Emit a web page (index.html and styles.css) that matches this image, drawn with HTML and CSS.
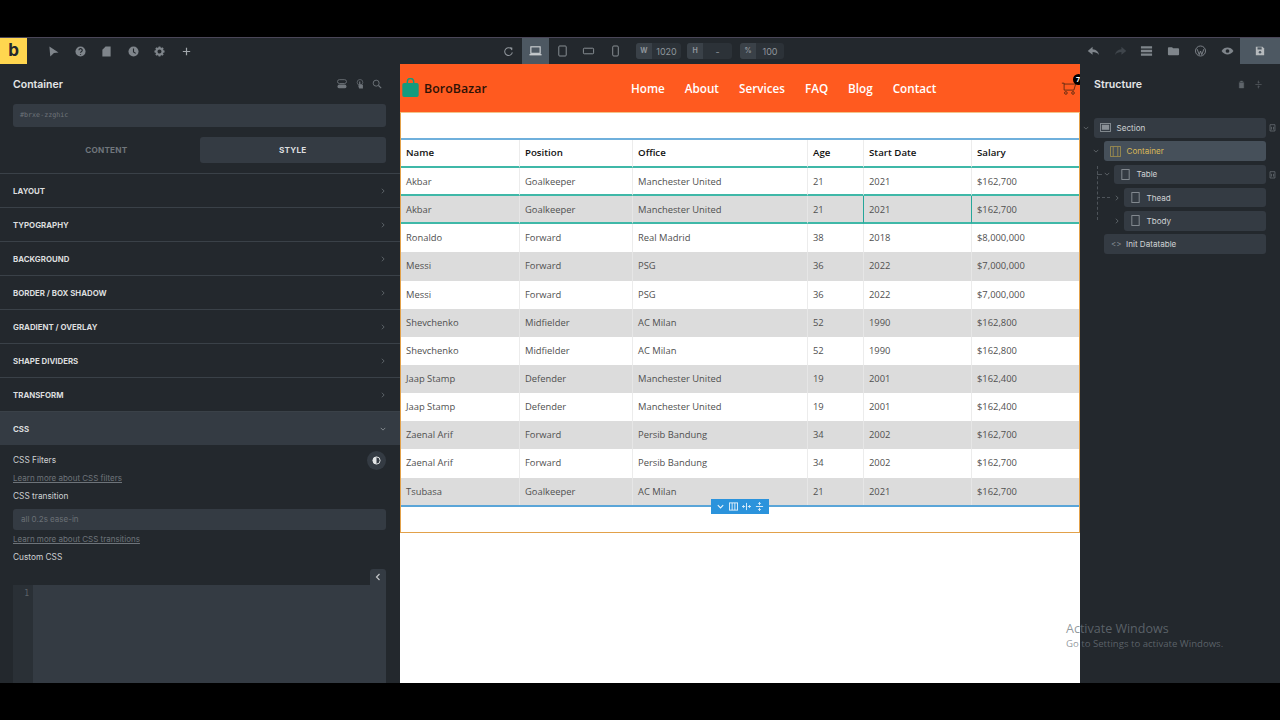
FILE: index.html
```html
<!DOCTYPE html>
<html lang="en">
<head>
<meta charset="utf-8">
<title>Structure</title>
<link rel="stylesheet" href="styles.css">
</head>
<body>
<div class="screen">
  <header class="topbar">
    <div class="tb-left">
      <div class="logo">b</div>
      <div class="tb-icons">
        <svg class="ic" viewBox="0 0 12 12"><path d="M1.500 .5 11.500 7 6.500 7.500 2.500 11.500Z" fill="currentColor"/></svg>
        <svg class="ic" viewBox="0 0 12 12"><circle cx="6" cy="6" r="5.5" fill="currentColor"/><path d="M4.300 4.600a1.800 1.800 0 1 1 2.600 1.600c-.6.3-.9.6-.9 1.200M6 8.600v1" stroke="#23282d" stroke-width="1.300" fill="none"/></svg>
        <svg class="ic" viewBox="0 0 12 12"><path d="M5 .5h5.500v11h-9V4Z" fill="currentColor"/></svg>
        <svg class="ic" viewBox="0 0 12 12"><circle cx="6" cy="6" r="5.5" fill="currentColor"/><path d="M6 2.800V6.400L8.400 8" stroke="#23282d" stroke-width="1.200" fill="none"/></svg>
        <svg class="ic" viewBox="0 0 12 12"><circle cx="6" cy="6" r="3.400" fill="none" stroke="currentColor" stroke-width="2.400"/><path d="M6 .5v2M6 9.500v2M.5 6h2M9.500 6h2M2.100 2.100l1.400 1.400M8.500 8.500l1.400 1.400M9.900 2.100 8.500 3.500M3.500 8.500 2.100 9.900" stroke="currentColor" stroke-width="2"/></svg>
        <svg class="ic ic-plus" viewBox="0 0 12 12"><path d="M6 2v8M2 6h8" stroke="currentColor" stroke-width="1.300"/></svg>
      </div>
    </div>
    <div class="tb-center">
      <svg class="ic-sm reload" viewBox="0 0 12 12"><path d="M9.800 4.200A4.200 4.200 0 1 0 10.200 7" fill="none" stroke="currentColor" stroke-width="1.100"/><path d="M7.500 1 10.300 2 9.800 4.800Z" fill="currentColor"/></svg>
      <div class="bp bp-active"><svg viewBox="0 0 14 12" class="ic-bp"><rect x="2" y="1.500" width="10" height="7" fill="none" stroke="currentColor" stroke-width="1.200"/><path d="M.5 10h13" stroke="currentColor" stroke-width="1.400"/></svg></div>
      <div class="bp"><svg viewBox="0 0 14 12" class="ic-bp"><rect x="3" y=".6" width="8" height="10.800" rx="1" fill="none" stroke="currentColor"/></svg></div>
      <div class="bp"><svg viewBox="0 0 14 12" class="ic-bp"><rect x="1.500" y="3" width="11" height="6" rx="1" fill="none" stroke="currentColor"/></svg></div>
      <div class="bp"><svg viewBox="0 0 14 12" class="ic-bp"><rect x="4" y=".6" width="6" height="10.800" rx="1.200" fill="none" stroke="currentColor"/></svg></div>
      <div class="dim dim-w"><span class="dim-k">W</span><span class="dim-v">1020</span></div>
      <div class="dim dim-h"><span class="dim-k">H</span><span class="dim-v">-</span></div>
      <div class="dim dim-p"><span class="dim-k">%</span><span class="dim-v">100</span></div>
    </div>
    <div class="tb-right">
      <svg class="ic-r" viewBox="0 0 14 12"><path d="M6 1.500 .8 6 6 10V7.200c3 0 5 .8 7 3-.6-3.600-3-6-7-6.200Z" fill="currentColor"/></svg>
      <svg class="ic-r dim-ic" viewBox="0 0 14 12"><path d="M8 1.500 13.200 6 8 10V7.200c-3 0-5 .8-7 3 .6-3.600 3-6 7-6.200Z" fill="currentColor"/></svg>
      <svg class="ic-r" viewBox="0 0 14 12"><path d="M1 .8h12v2.600H1ZM1 4.700h12v2.600H1ZM1 8.600h12v2.600H1Z" fill="currentColor"/></svg>
      <svg class="ic-r" viewBox="0 0 14 12"><path d="M1 3a1 1 0 0 1 1-1h3.500l1 1H12a1 1 0 0 1 1 1v5.600a1 1 0 0 1-1 1H2a1 1 0 0 1-1-1Z" fill="currentColor"/></svg>
      <svg class="ic-r" viewBox="0 0 14 12"><circle cx="7" cy="6" r="5.400" fill="none" stroke="currentColor" stroke-width="1"/><path d="M3.400 4 5.600 10 7 6l1.400 4 2.200-6" fill="none" stroke="currentColor" stroke-width="1"/></svg>
      <svg class="ic-r" viewBox="0 0 14 12"><path d="M.6 6C3.600 1 10.400 1 13.400 6 10.400 11 3.600 11 .6 6Z" fill="currentColor"/><circle cx="7" cy="6" r="2" fill="#23282d"/></svg>
      <div class="save"><svg class="ic-s" viewBox="0 0 12 12"><path d="M1 1h8l2 2v8H1Z" fill="currentColor"/><rect x="3" y="1.600" width="5" height="2.600" fill="#4d5862"/><circle cx="6" cy="7.600" r="1.500" fill="#4d5862"/></svg></div>
    </div>
  </header>

  <div class="main">
    <aside class="panel">
      <div class="p-head">
        <span class="p-title">Container</span>
        <div class="p-tools">
          <svg class="pt" viewBox="0 0 12 12"><rect x=".6" y=".8" width="10.800" height="4.600" rx="2.300" fill="none" stroke="currentColor"/><rect x=".6" y="6.600" width="10.800" height="4.600" rx="2.300" fill="currentColor"/></svg>
          <svg class="pt" viewBox="0 0 12 12"><circle cx="6" cy="4" r="3.400" fill="none" stroke="currentColor" stroke-width=".8"/><path d="M5 3v5L3.600 7.400 5 11.500h4.500V7.200L6.400 6.400V3Z" fill="currentColor"/></svg>
          <svg class="pt" viewBox="0 0 12 12"><circle cx="5" cy="5" r="3.600" fill="none" stroke="currentColor" stroke-width="1.100"/><path d="M7.800 7.800 11 11" stroke="currentColor" stroke-width="1.300"/></svg>
        </div>
      </div>
      <div class="id-field">#brxe-zzghic</div>
      <div class="tabs">
        <div class="tab">CONTENT</div>
        <div class="tab tab-on">STYLE</div>
      </div>
      <div class="acc"><span>LAYOUT</span><svg class="chev" viewBox="0 0 6 8"><path d="M1.500 1 4.500 4 1.500 7" fill="none" stroke="currentColor"/></svg></div>
      <div class="acc"><span>TYPOGRAPHY</span><svg class="chev" viewBox="0 0 6 8"><path d="M1.500 1 4.500 4 1.500 7" fill="none" stroke="currentColor"/></svg></div>
      <div class="acc"><span>BACKGROUND</span><svg class="chev" viewBox="0 0 6 8"><path d="M1.500 1 4.500 4 1.500 7" fill="none" stroke="currentColor"/></svg></div>
      <div class="acc"><span>BORDER / BOX SHADOW</span><svg class="chev" viewBox="0 0 6 8"><path d="M1.500 1 4.500 4 1.500 7" fill="none" stroke="currentColor"/></svg></div>
      <div class="acc"><span>GRADIENT / OVERLAY</span><svg class="chev" viewBox="0 0 6 8"><path d="M1.500 1 4.500 4 1.500 7" fill="none" stroke="currentColor"/></svg></div>
      <div class="acc"><span>SHAPE DIVIDERS</span><svg class="chev" viewBox="0 0 6 8"><path d="M1.500 1 4.500 4 1.500 7" fill="none" stroke="currentColor"/></svg></div>
      <div class="acc"><span>TRANSFORM</span><svg class="chev" viewBox="0 0 6 8"><path d="M1.500 1 4.500 4 1.500 7" fill="none" stroke="currentColor"/></svg></div>
      <div class="acc acc-open"><span>CSS</span><svg class="chev chev-open" viewBox="0 0 8 6"><path d="M1 1.500 4 4.500 7 1.500" fill="none" stroke="currentColor"/></svg></div>
      <div class="css-body">
        <div class="filters"><span class="lbl">CSS Filters</span><span class="round"><svg viewBox="0 0 12 12" class="half"><circle cx="6" cy="6" r="4.800" fill="none" stroke="currentColor" stroke-width="1.300"/><path d="M6 1.200a4.800 4.800 0 0 0 0 9.600Z" fill="currentColor"/></svg></span></div>
        <a class="lnk lnk-1">Learn more about CSS filters</a>
        <div class="lbl lbl-t">CSS transition</div>
        <div class="tr-field">all 0.2s ease-in</div>
        <a class="lnk lnk-2">Learn more about CSS transitions</a>
        <div class="lbl lbl-c">Custom CSS</div>
        <div class="editor-wrap">
          <div class="collapse"><svg viewBox="0 0 6 8" class="coll-ic"><path d="M4.500 1 1.500 4 4.500 7" fill="none" stroke="currentColor" stroke-width="1.200"/></svg></div>
          <div class="editor"><div class="gutter">1</div></div>
        </div>
      </div>
    </aside>

    <section class="canvas">
      <nav class="site-nav">
        <div class="brand">
          <svg class="bag" viewBox="0 0 18 22"><path d="M5.500 6V4a3.500 3.500 0 0 1 7 0v2" fill="none" stroke="#149b7e" stroke-width="1.600"/><path d="M2 5.500h14a2 2 0 0 1 2 2V19a2 2 0 0 1-2 2H2a2 2 0 0 1-2-2V7.500a2 2 0 0 1 2-2Z" fill="#149b7e"/></svg>
          <span class="brand-name">BoroBazar</span>
        </div>
        <div class="links"><span>Home</span><span>About</span><span>Services</span><span>FAQ</span><span>Blog</span><span>Contact</span></div>
        <div class="cart">
          <svg class="cart-ic" viewBox="0 0 18 14"><path d="M1 1h2.500v7.800h11L16.500 2H3.500" fill="none" stroke="#5a2a12" stroke-width="1"/><circle cx="5.500" cy="12" r="1.500" fill="none" stroke="#5a2a12"/><circle cx="13.500" cy="12" r="1.500" fill="none" stroke="#5a2a12"/></svg>
          <span class="badge">7</span>
        </div>
      </nav>
      <div class="container-box">
        <table class="dt">
          <thead><tr><th class="c1">Name</th><th class="c2">Position</th><th class="c3">Office</th><th class="c4">Age</th><th class="c5">Start Date</th><th class="c6">Salary</th></tr></thead>
          <tbody>
            <tr class="sel"><td>Akbar</td><td>Goalkeeper</td><td>Manchester United</td><td>21</td><td>2021</td><td>$162,700</td></tr>
            <tr class="alt sel"><td>Akbar</td><td>Goalkeeper</td><td>Manchester United</td><td>21</td><td>2021</td><td>$162,700</td></tr>
            <tr><td>Ronaldo</td><td>Forward</td><td>Real Madrid</td><td>38</td><td>2018</td><td>$8,000,000</td></tr>
            <tr class="alt"><td>Messi</td><td>Forward</td><td>PSG</td><td>36</td><td>2022</td><td>$7,000,000</td></tr>
            <tr><td>Messi</td><td>Forward</td><td>PSG</td><td>36</td><td>2022</td><td>$7,000,000</td></tr>
            <tr class="alt"><td>Shevchenko</td><td>Midfielder</td><td>AC Milan</td><td>52</td><td>1990</td><td>$162,800</td></tr>
            <tr><td>Shevchenko</td><td>Midfielder</td><td>AC Milan</td><td>52</td><td>1990</td><td>$162,800</td></tr>
            <tr class="alt"><td>Jaap Stamp</td><td>Defender</td><td>Manchester United</td><td>19</td><td>2001</td><td>$162,400</td></tr>
            <tr><td>Jaap Stamp</td><td>Defender</td><td>Manchester United</td><td>19</td><td>2001</td><td>$162,400</td></tr>
            <tr class="alt"><td>Zaenal Arif</td><td>Forward</td><td>Persib Bandung</td><td>34</td><td>2002</td><td>$162,700</td></tr>
            <tr><td>Zaenal Arif</td><td>Forward</td><td>Persib Bandung</td><td>34</td><td>2002</td><td>$162,700</td></tr>
            <tr class="alt"><td>Tsubasa</td><td>Goalkeeper</td><td>AC Milan</td><td>21</td><td>2021</td><td>$162,700</td></tr>
          </tbody>
        </table>
        <div class="el-tools">
          <svg viewBox="0 0 10 10"><path d="M2 3.500 5 6.500 8 3.500" fill="none" stroke="currentColor" stroke-width="1.300"/></svg>
          <svg viewBox="0 0 10 10"><rect x=".5" y="1" width="9" height="8" fill="none" stroke="currentColor"/><path d="M3.500 1v8M6.500 1v8" stroke="currentColor"/></svg>
          <svg viewBox="0 0 10 10"><path d="M5 1v8M.5 5h3M6.500 5h3M2 3.500.5 5 2 6.500M8 3.500 9.500 5 8 6.500" fill="none" stroke="currentColor"/></svg>
          <svg viewBox="0 0 10 10"><path d="M1 5h8M5 .5v3M5 6.500v3M3.500 2 5 .5 6.500 2M3.500 8 5 9.500 6.500 8" fill="none" stroke="currentColor"/></svg>
        </div>
      </div>
    </section>

    <aside class="structure">
      <div class="s-head">
        <span class="s-title">Structure</span>
        <div class="s-tools">
          <svg viewBox="0 0 10 12"><path d="M1 2.500h8M3.500 2.500V1h3v1.500M1.800 3.500h6.400V11H1.800Z" fill="currentColor" stroke="currentColor" stroke-width=".6"/></svg>
          <svg viewBox="0 0 10 12"><path d="M.5 6h9M5 .5v3.500M5 8v3.500M3.500 2.500 5 4 6.500 2.500M3.500 9.500 5 8 6.500 9.500" fill="none" stroke="currentColor" stroke-width=".9"/></svg>
        </div>
      </div>
      <div class="tree">
        <div class="t-row t0">
          <svg class="t-ch" viewBox="0 0 8 6"><path d="M1 1.500 4 4.500 7 1.500" fill="none" stroke="currentColor"/></svg>
          <div class="t-item"><svg class="t-ic" viewBox="0 0 12 12"><rect x=".6" y="1.600" width="10.800" height="8.800" fill="none" stroke="currentColor"/><rect x="2" y="3" width="8" height="5.500" fill="currentColor"/></svg>Section</div>
          <svg class="t-del" viewBox="0 0 10 12"><path d="M1.500 2h7v9h-7ZM3.500 5v4M6.500 5v4" fill="none" stroke="currentColor"/></svg>
        </div>
        <div class="t-row t1">
          <svg class="t-ch" viewBox="0 0 8 6"><path d="M1 1.500 4 4.500 7 1.500" fill="none" stroke="currentColor"/></svg>
          <div class="t-item t-sel"><svg class="t-ic" viewBox="0 0 12 12"><rect x=".6" y=".6" width="10.800" height="10.800" fill="none" stroke="currentColor"/><path d="M3.500 .6v10.800M8.500 .6v10.800" stroke="currentColor"/></svg>Container</div>
        </div>
        <div class="t-row t2">
          <svg class="t-ch" viewBox="0 0 8 6"><path d="M1 1.500 4 4.500 7 1.500" fill="none" stroke="currentColor"/></svg>
          <div class="t-item"><svg class="t-ic" viewBox="0 0 12 12"><rect x="2" y=".6" width="8" height="10.800" fill="none" stroke="currentColor"/></svg>Table</div>
          <svg class="t-del" viewBox="0 0 10 12"><path d="M1.500 2h7v9h-7ZM3.500 5v4M6.500 5v4" fill="none" stroke="currentColor"/></svg>
        </div>
        <div class="t-row t3">
          <svg class="t-ch" viewBox="0 0 6 8"><path d="M1.500 1 4.500 4 1.500 7" fill="none" stroke="currentColor"/></svg>
          <div class="t-item"><svg class="t-ic" viewBox="0 0 12 12"><rect x="2" y=".6" width="8" height="10.800" fill="none" stroke="currentColor"/></svg>Thead</div>
        </div>
        <div class="t-row t3">
          <svg class="t-ch" viewBox="0 0 6 8"><path d="M1.500 1 4.500 4 1.500 7" fill="none" stroke="currentColor"/></svg>
          <div class="t-item"><svg class="t-ic" viewBox="0 0 12 12"><rect x="2" y=".6" width="8" height="10.800" fill="none" stroke="currentColor"/></svg>Tbody</div>
        </div>
        <div class="t-row t1">
          <div class="t-item t-code"><span class="code-ic">&lt;&gt;</span>Init Datatable</div>
        </div>
        <div class="t-guide"></div>
        <div class="t-dash t-dash-a"></div>
        <div class="t-dash t-dash-b"></div>
      </div>
    </aside>
  </div>
  <div class="activate"><div class="a1">Activate Windows</div><div class="a2">Go to Settings to activate Windows.</div></div>
</div>
</body>
</html>
```
FILE: styles.css
```css
* { box-sizing: border-box; }
html, body { margin: 0; height: 100%; background: #000; overflow: hidden; }
body { font-family: Inter, "Liberation Sans", sans-serif; }
.screen { position: relative; width: 1280px; height: 720px; padding-top: 37px; padding-bottom: 37px; background: #000; display: flex; flex-direction: column; }

.topbar { height: 27px; flex: none; background: #23282d; border-top: 1px solid #4a4658; display: flex; justify-content: space-between; color: #8f959b; position: relative; }
.tb-left { display: flex; align-items: center; }
.logo { width: 27px; height: 26px; background: #ffd64f; color: #23282d; font: 700 17px/25px Inter, sans-serif; text-align: center; }
.tb-icons { display: flex; align-items: center; margin-left: 21px; gap: 15.600px; }
.ic { width: 11px; height: 11px; color: #7f858b; display: block; }
.ic-plus { color: #a2a7ac; }
.tb-center { position: absolute; left: 503px; top: 0; height: 26px; display: flex; align-items: center; }
.ic-sm { width: 11px; height: 11px; }
.reload { color: #8f959b; margin-right: 8px; }
.bp { width: 26.500px; height: 26px; display: flex; align-items: center; justify-content: center; }
.bp-active { width: 27px; background: #4d5862; color: #cfd3d6; }
.ic-bp { width: 13px; height: 12px; display: block; }
.dim { height: 16px; display: flex; align-items: center; background: #2c3238; border-radius: 3px; font-size: 9px; color: #8f959b; }
.dim-w { margin-left: 7.500px; width: 45px; }
.dim-h { margin-left: 6px; width: 45px; }
.dim-p { margin-left: 8px; width: 44px; }
.dim-k { width: 16px; height: 16px; background: #3a4148; border-radius: 3px 0 0 3px; font-weight: 700; font-size: 7px; text-align: center; line-height: 16px; }
.dim-v { flex: 1; text-align: center; }
.tb-right { margin-left: auto; display: flex; align-items: center; gap: 13.700px; }
.ic-r { width: 13px; height: 12px; color: #7f858b; display: block; }
.dim-ic { color: #3f454b; }
.save { width: 40px; height: 26px; background: #4d5862; display: flex; align-items: center; justify-content: center; color: #b6babd; margin-left: -7.200px; }
.ic-s { width: 10px; height: 10px; }

.main { flex: 1; min-height: 0; display: flex; }
.panel { width: 400px; flex: none; background: #23282d; overflow: hidden; display: flex; flex-direction: column; }
.p-head { height: 40px; padding: 0 18px 0 13px; display: flex; align-items: center; justify-content: space-between; }
.p-title { font-size: 10.500px; font-weight: 600; color: #e4e6e7; }
.p-tools { display: flex; gap: 7.500px; color: #70767c; }
.pt { width: 10px; height: 10px; display: block; }
.id-field { margin: 0 14px 0 13px; height: 23px; background: #343b43; border-radius: 3px; padding-left: 7px; font: 6.700px/23px "DejaVu Sans Mono", monospace; color: #6e747a; flex: none; }
.tabs { display: flex; margin: 10px 14px 0 13px; height: 26px; flex: none; }
.tab { flex: 1; text-align: center; font-size: 8.200px; font-weight: 700; line-height: 26px; color: #70767c; border-radius: 3px; letter-spacing: .2px; }
.tab-on { background: #343b43; color: #dcdedf; }
.acc { height: 34px; flex: none; border-top: 1px solid #3a4148; padding: 0 14px 0 13px; display: flex; align-items: center; justify-content: space-between; font-size: 7.850px; font-weight: 700; color: #dcdedf; }
.tabs + .acc { margin-top: 10px; }
.chev { width: 6px; height: 6px; color: #6e747a; display: block; }
.chev-open { color: #9aa0a5; }
.acc-open { background: #343b43; }
.css-body { padding: 2px 14px 0 13px; flex: 1; display: flex; flex-direction: column; min-height: 0; }
.filters { height: 26px; display: flex; align-items: center; justify-content: space-between; }
.lbl { font-size: 8.300px; color: #cfd2d4; }
.round { width: 19px; height: 19px; border-radius: 50%; background: #343b43; display: flex; align-items: center; justify-content: center; color: #e4e6e7; }
.half { width: 9px; height: 9px; }
.lnk { font-size: 8px; color: #6e747a; text-decoration: underline; line-height: 11px; }
.lnk-1 { margin-top: 0; }
.lbl-t { margin-top: 7px; line-height: 11px; }
.tr-field { margin-top: 6.500px; height: 21.500px; background: #343b43; border-radius: 3px; padding-left: 8px; font-size: 8px; line-height: 21px; color: #6a7076; flex: none; }
.lnk-2 { margin-top: 3.500px; }
.lbl-c { margin-top: 7px; line-height: 11px; }
.editor-wrap { position: relative; margin-top: 6px; flex: 1; padding-top: 16px; min-height: 0; }
.collapse { position: absolute; right: 0; top: 0; width: 16px; height: 17px; background: #343b43; border-radius: 3px 3px 0 0; display: flex; align-items: center; justify-content: center; color: #c2c5c8; }
.coll-ic { width: 6px; height: 8px; }
.editor { height: 100%; background: #343b43; }
.gutter { width: 20px; height: 100%; background: #2a3036; text-align: right; padding: 4px 4px 0 0; font: 8px/10px "DejaVu Sans Mono", monospace; color: #5d6369; }

.canvas { width: 680px; flex: none; background: #fff; display: flex; flex-direction: column; position: relative; }
.site-nav { height: 48px; flex: none; background: #ff5a1f; display: flex; align-items: center; position: relative; }
.brand { display: flex; align-items: center; margin-left: 2px; }
.bag { width: 17px; height: 20px; display: block; }
.brand-name { margin-left: 5px; font: 600 12.300px "Open Sans", sans-serif; color: #2e1206; letter-spacing: .1px; }
.links { position: absolute; left: 231px; top: 0; height: 48px; display: flex; align-items: center; gap: 20px; font: 600 11.700px "Open Sans", sans-serif; color: #fff; padding-bottom: 1px; }
.cart { position: absolute; right: 0; top: 8px; width: 21px; height: 26px; }
.cart-ic { position: absolute; left: 2px; top: 10px; width: 16px; height: 13px; display: block; }
.badge { position: absolute; left: 13.500px; top: 1.500px; width: 11px; height: 11px; border-radius: 50%; background: #000; color: #fff; font: 700 7px/11px "Open Sans", sans-serif; text-align: center; }
.container-box { position: relative; height: 421px; flex: none; border: 1px solid #e2a14a; border-top-color: #f2c48a; padding-top: 25px; }
.dt { width: 678px; border-collapse: separate; border-spacing: 0; table-layout: fixed; font: 400 9.400px "Open Sans", sans-serif; color: #505050; border-top: 2px solid #6fb0dc; border-bottom: 2px solid #5aa5d8; }
.c1 { width: 118px; } .c2 { width: 113px; } .c3 { width: 175px; } .c4 { width: 56px; } .c5 { width: 108px; } .c6 { width: 108px; }
.dt th { height: 28px; padding: 0 5px 1px; text-align: left; font-weight: 600; color: #111; font-size: 9.700px; border-left: 1px solid #ececec; border-bottom: 2px solid #3fb8a8; }
.dt th:first-child, .dt td:first-child { border-left: 0; }
.dt td { height: 28.150px; padding: 0 5px 1px; border-left: 1px solid #ececec; white-space: nowrap; }
.dt tr.alt td { background: #dcdcdc; border-left-color: #e6e6e6; }
.dt tr.sel td { border-bottom: 2px solid #3fb8a8; padding-bottom: 0; }
.dt tr.alt.sel td:nth-child(5), .dt tr.alt.sel td:nth-child(6) { border-left-color: #26a69a; }
.dt tbody tr:last-child td { height: 27.400px; padding-bottom: 0; }
.el-tools { position: absolute; left: 310px; top: 386px; width: 58px; height: 15px; background: #2b93dc; color: #e8f4fc; display: flex; align-items: center; justify-content: space-around; padding: 0 3px; }
.el-tools svg { width: 9px; height: 9px; display: block; }

.structure { width: 200px; flex: none; background: #23282d; position: relative; }
.s-head { height: 40px; padding: 0 18px 0 14px; display: flex; align-items: center; justify-content: space-between; }
.s-title { font-size: 10.600px; font-weight: 600; color: #e4e6e7; }
.s-tools { display: flex; gap: 10px; color: #5f656b; }
.s-tools svg { width: 7px; height: 9px; display: block; }
.tree { position: relative; padding-top: 14px; display: flex; flex-direction: column; gap: 3.800px; }
.t-row { position: relative; height: 19.500px; flex: none; display: flex; align-items: center; }
.t0 { padding-left: 14px; } .t1 { padding-left: 24px; } .t2 { padding-left: 34px; } .t3 { padding-left: 44px; }
.t-ch { position: absolute; width: 6px; height: 6px; color: #6e747a; display: block; margin-left: -11px; }
.t2 .t-ch, .t3 .t-ch { margin-left: -10px; }
.t-item { height: 19.500px; flex: 1; margin-right: 14px; background: #343b43; border-radius: 3px; display: flex; align-items: center; font-size: 8.100px; color: #cfd2d4; padding-left: 6px; }
.t-ic { width: 11px; height: 11px; color: #8a9096; margin-right: 5.500px; flex: none; }
.t-sel { background: #46505a; color: #d8b758; }
.t-sel .t-ic { color: #9a8a4f; }
.t-code { padding-left: 7px; }
.code-ic { font-size: 8px; width: 12px; margin-right: 3px; color: #8a9096; }
.t-del { position: absolute; right: 4px; width: 7px; height: 9px; color: #70767c; }
.t-guide { position: absolute; left: 16.500px; top: 62px; width: 0; height: 54px; border-left: 1px dashed #4e545a; }
.t-dash { position: absolute; height: 0; border-top: 1px dashed #4e545a; }
.t-dash-a { left: 17px; top: 70px; width: 5px; }
.t-dash-b { left: 17px; top: 93px; width: 13px; }

.activate { position: absolute; left: 1066px; top: 621px; color: rgba(110,118,125,.75); pointer-events: none; }
.a1 { font: 400 12.500px/15px "Open Sans", sans-serif; }
.a2 { font: 400 9.600px/15px "Open Sans", sans-serif; }
```
